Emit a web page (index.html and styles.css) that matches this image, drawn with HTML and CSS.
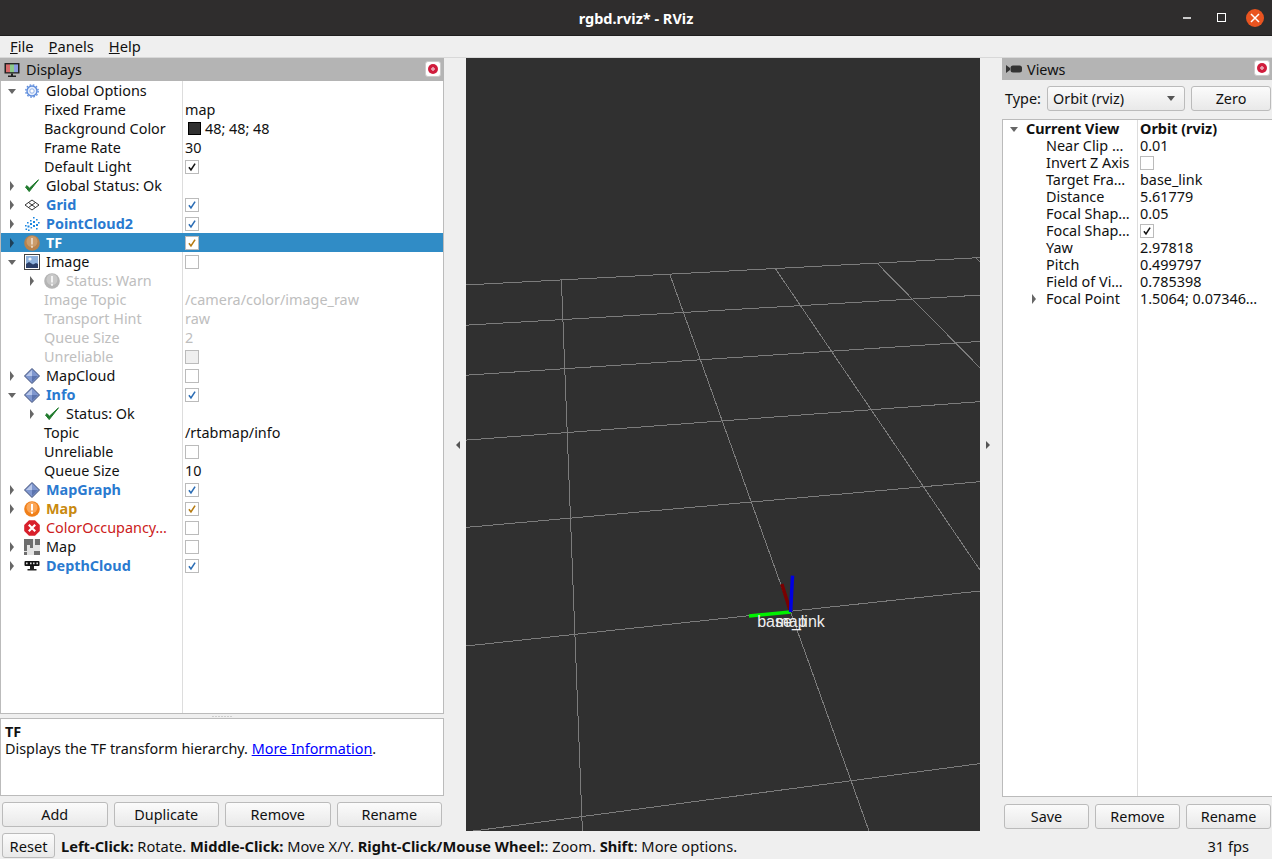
FILE: index.html
```html
<!DOCTYPE html>
<html lang="en">
<head>
    <meta charset="UTF-8">
    <title>rgbd.rviz* - RViz</title>
    <link rel="stylesheet" href="styles.css">
</head>
<body>

<!-- icons used by the tree rows -->
<svg class="sprite" aria-hidden="true">
    <symbol id="i-gear" viewBox="0 0 16 16">
        <circle cx="8" cy="8" r="5" fill="#e6eefc" stroke="#5d8cdc" stroke-width="1.4"/>
        <circle cx="8" cy="8" r="6.2" fill="none" stroke="#5d8cdc" stroke-width="1.4" stroke-dasharray="1.6 1.65"/>
        <circle cx="8" cy="8" r="2.2" fill="#fff" stroke="#8fb0e8"/>
    </symbol>
    <symbol id="i-check" viewBox="0 0 16 16">
        <path d="M1.5 9 L5.2 13.6 L14.5 1.8 L5.4 10.2 L3 7.6 Z" fill="#1f7a2c" stroke="#1f7a2c" stroke-linejoin="round"/>
    </symbol>
    <symbol id="i-grid" viewBox="0 0 16 16">
        <path d="M1 8 L8 3 L15 8 L8 13 Z M4.5 5.5 L11.5 10.5 M11.5 5.5 L4.5 10.5" fill="none" stroke="#333" stroke-width="1"/>
    </symbol>
    <symbol id="i-cloud" viewBox="0 0 16 16">
        <path d="M9 1h1.6v1.6H9z M12 3h1.6v1.6H12z M6 4h1.6v1.6H6z M9 5h2v2H9z M3 6h1.6v1.6H3z M14 6h1.6v1.6H14z M6 7h2v2H6z M12 8h2v2h-2z M1 9h1.6v1.6H1z M3.5 9.5h2v2h-2z M9 9h2v2H9z M6.5 11h1.6v1.6H6.5z M1.5 12.5h1.6v1.6H1.5z M12 12h1.6v1.6H12z M4 13.5h1.6v1.6H4z" fill="#1c86e0"/>
    </symbol>
    <symbol id="i-warn" viewBox="0 0 16 16">
        <circle cx="8" cy="8" r="7.8" fill="#f0801a"/>
        <circle cx="8" cy="6.5" r="5.5" fill="#fba75a"/>
        <path d="M7 3h2v6.4H7z M7 10.8h2v2H7z" fill="#fff"/>
    </symbol>
    <symbol id="i-warn-sel" viewBox="0 0 16 16">
        <circle cx="8" cy="8" r="7.8" fill="#b9824c"/>
        <circle cx="8" cy="6.5" r="5.5" fill="#cb9c6c"/>
        <path d="M7 3h2v6.4H7z M7 10.8h2v2H7z" fill="#e7d3bd"/>
    </symbol>
    <symbol id="i-warn-off" viewBox="0 0 16 16">
        <circle cx="8" cy="8" r="7.8" fill="#b4b4b4"/>
        <circle cx="8" cy="6.5" r="5.5" fill="#c8c8c8"/>
        <path d="M7 3h2v6.4H7z M7 10.8h2v2H7z" fill="#f2f2f2"/>
    </symbol>
    <symbol id="i-error" viewBox="0 0 16 16">
        <path d="M5 .2h6L15.8 5v6L11 15.8H5L.2 11V5z" fill="#d8202c"/>
        <path d="M4.8 4.8l6.4 6.4M11.2 4.8l-6.4 6.4" stroke="#fff" stroke-width="2.2"/>
    </symbol>
    <symbol id="i-image" viewBox="0 0 16 16">
        <rect x=".5" y=".5" width="15" height="15" fill="#fff" stroke="#444"/>
        <rect x="2" y="2" width="12" height="12" fill="#8fb2dc"/>
        <path d="M2 14 V10 L5 8 L9 10.5 L12 9 L14 10 V14 Z" fill="#2b3f68"/>
        <circle cx="6" cy="5" r="1.6" fill="#eef4fb"/>
    </symbol>
    <symbol id="i-diamond" viewBox="0 0 16 16">
        <path d="M8 .5 L15.5 8 L8 15.5 L.5 8 Z" fill="#7f97cf" stroke="#3f4f78"/>
        <path d="M8 2 L8 8 L2 8 Z" fill="#b9c8ea"/>
        <path d="M8 14 L8 8 L14 8 Z" fill="#5c74ae"/>
    </symbol>
    <symbol id="i-map" viewBox="0 0 16 16">
        <rect width="16" height="16" fill="#e4e4e4"/>
        <path d="M0 0h6v6H0z M6 0h3v3H6z M11 0h5v6h-5z M0 6h3v6H0z M6 3h3v6H6z M0 13h3v3H0z M10 12h6v4h-6z" fill="#6e6e6e"/>
    </symbol>
    <symbol id="i-depth" viewBox="0 0 16 16">
        <rect x=".5" y="3" width="15" height="5" rx="1" fill="#111"/>
        <path d="M2 4.6h1.6v1.6H2z M6 4.6h1.6v1.6H6z M9 4.6h1.6v1.6H9z M12.4 4.6H14v1.6h-1.6z" fill="#ddd"/>
        <path d="M6 8h4v3H6z M3.5 11h9v1.6h-9z" fill="#222"/>
    </symbol>
    <symbol id="i-tick" viewBox="0 0 14 14">
        <path d="M3.4 7.2 L5.8 10.4 L10.6 3" fill="none" stroke="currentColor" stroke-width="1.8"/>
    </symbol>
</svg>

<header class="titlebar">
    <span></span>
    <div class="wintitle">rgbd.rviz* - RViz</div>
    <div class="winbtns">
        <svg width="8" height="2" viewBox="0 0 8 2"><path d="M0 1h8" stroke="#fff" stroke-width="1.5"/></svg>
        <svg width="9" height="9" viewBox="0 0 9 9"><rect x=".5" y=".5" width="8" height="8" fill="none" stroke="#fff"/></svg>
        <div class="winclose">
            <svg width="10" height="10" viewBox="0 0 10 10"><path d="M1 1l8 8M9 1l-8 8" stroke="#fff" stroke-width="1.5"/></svg>
        </div>
    </div>
</header>

<nav class="menubar">
    <span><u>F</u>ile</span>
    <span><u>P</u>anels</span>
    <span><u>H</u>elp</span>
</nav>

<main class="workspace">
    <section class="dock dock-left">
        <div class="dock-title">
            <svg class="dock-icon" viewBox="0 0 16 16">
                <rect x=".5" y="1" width="15" height="10.5" fill="#222"/>
                <rect x="2" y="2.4" width="4" height="7.8" fill="#d76a6a"/>
                <rect x="6" y="2.4" width="4" height="7.8" fill="#8cc98a"/>
                <rect x="10" y="2.4" width="4" height="7.8" fill="#8a9be0"/>
                <path d="M7 11.5h2v2H7z M4 13.5h8V15H4z" fill="#222"/>
            </svg>
            <span>Displays</span>
            <div class="dock-close"><i></i></div>
        </div>
        <div class="tree tree-displays">
            <div class="row"><div class="name"><span class="arrow open"></span><svg class="icon"><use href="#i-gear"/></svg><span>Global Options</span></div></div>
            <div class="row"><div class="name prop">Fixed Frame</div><div class="value">map</div></div>
            <div class="row"><div class="name prop">Background Color</div><div class="value"><i class="swatch"></i>48; 48; 48</div></div>
            <div class="row"><div class="name prop">Frame Rate</div><div class="value">30</div></div>
            <div class="row"><div class="name prop">Default Light</div><div class="value"><span class="box"><svg><use href="#i-tick"/></svg></span></div></div>
            <div class="row"><div class="name"><span class="arrow"></span><svg class="icon"><use href="#i-check"/></svg><span>Global Status: Ok</span></div></div>
            <div class="row"><div class="name"><span class="arrow"></span><svg class="icon"><use href="#i-grid"/></svg><b class="blue">Grid</b></div><div class="value"><span class="box blue"><svg><use href="#i-tick"/></svg></span></div></div>
            <div class="row"><div class="name"><span class="arrow"></span><svg class="icon"><use href="#i-cloud"/></svg><b class="blue">PointCloud2</b></div><div class="value"><span class="box blue"><svg><use href="#i-tick"/></svg></span></div></div>
            <div class="row selected"><div class="name"><span class="arrow"></span><svg class="icon"><use href="#i-warn-sel"/></svg><b>TF</b></div><div class="value"><span class="box orange"><svg><use href="#i-tick"/></svg></span></div></div>
            <div class="row"><div class="name"><span class="arrow open"></span><svg class="icon"><use href="#i-image"/></svg><span>Image</span></div><div class="value"><span class="box"></span></div></div>
            <div class="row off"><div class="name sub"><span class="arrow"></span><svg class="icon"><use href="#i-warn-off"/></svg><span>Status: Warn</span></div></div>
            <div class="row off"><div class="name prop">Image Topic</div><div class="value">/camera/color/image_raw</div></div>
            <div class="row off"><div class="name prop">Transport Hint</div><div class="value">raw</div></div>
            <div class="row off"><div class="name prop">Queue Size</div><div class="value">2</div></div>
            <div class="row off"><div class="name prop">Unreliable</div><div class="value"><span class="box"></span></div></div>
            <div class="row"><div class="name"><span class="arrow"></span><svg class="icon"><use href="#i-diamond"/></svg><span>MapCloud</span></div><div class="value"><span class="box"></span></div></div>
            <div class="row"><div class="name"><span class="arrow open"></span><svg class="icon"><use href="#i-diamond"/></svg><b class="blue">Info</b></div><div class="value"><span class="box blue"><svg><use href="#i-tick"/></svg></span></div></div>
            <div class="row"><div class="name sub"><span class="arrow"></span><svg class="icon"><use href="#i-check"/></svg><span>Status: Ok</span></div></div>
            <div class="row"><div class="name prop">Topic</div><div class="value">/rtabmap/info</div></div>
            <div class="row"><div class="name prop">Unreliable</div><div class="value"><span class="box"></span></div></div>
            <div class="row"><div class="name prop">Queue Size</div><div class="value">10</div></div>
            <div class="row"><div class="name"><span class="arrow"></span><svg class="icon"><use href="#i-diamond"/></svg><b class="blue">MapGraph</b></div><div class="value"><span class="box blue"><svg><use href="#i-tick"/></svg></span></div></div>
            <div class="row"><div class="name"><span class="arrow"></span><svg class="icon"><use href="#i-warn"/></svg><b class="orange">Map</b></div><div class="value"><span class="box orange"><svg><use href="#i-tick"/></svg></span></div></div>
            <div class="row"><div class="name"><span class="arrow none"></span><svg class="icon"><use href="#i-error"/></svg><span class="red">ColorOccupancy…</span></div><div class="value"><span class="box"></span></div></div>
            <div class="row"><div class="name"><span class="arrow"></span><svg class="icon"><use href="#i-map"/></svg><span>Map</span></div><div class="value"><span class="box"></span></div></div>
            <div class="row"><div class="name"><span class="arrow"></span><svg class="icon"><use href="#i-depth"/></svg><b class="blue">DepthCloud</b></div><div class="value"><span class="box blue"><svg><use href="#i-tick"/></svg></span></div></div>
        </div>
        <div class="handle"></div>
        <div class="description">
            <b>TF</b><br>
            Displays the TF transform hierarchy. <a href="#">More Information</a>.
        </div>
        <div class="btnrow">
            <button>Add</button>
            <button>Duplicate</button>
            <button>Remove</button>
            <button>Rename</button>
        </div>
    </section>

    <div class="splitter"><i class="tri-left"></i></div>

    <svg class="viewport" viewBox="466 58 514 773">
        <g class="grid">
            <path d="M466 285 L980 257.6"/>
            <path d="M466 325.2 L980 295.1"/>
            <path d="M466 375.2 L980 341.4"/>
            <path d="M466 440.1 L980 401.6"/>
            <path d="M466 527.4 L980 481.7"/>
            <path d="M466 646 L980 591"/>
            <path d="M466 832 L980 763.6"/>
            <path d="M561.4 280 L582.4 831"/>
            <path d="M669.6 273.8 L869 831"/>
            <path d="M775.4 268.7 L980 570"/>
            <path d="M877.5 263.7 L980 367.8"/>
            <path d="M975.5 257.6 L980 262"/>
        </g>
        <path class="axis" d="M790.6 612 L781.8 584" stroke="#7a0000"/>
        <path class="axis" d="M790.6 612 L749 615.9" stroke="#00f000"/>
        <path class="axis" d="M790.6 612 L792.5 575.6" stroke="#0000e0"/>
        <text class="frame" x="791" y="627" text-anchor="middle">base_link</text>
        <text class="frame" x="791" y="627" text-anchor="middle">map</text>
    </svg>

    <div class="splitter"><i class="tri-right"></i></div>

    <section class="dock dock-right">
        <div class="dock-title views-title">
            <svg class="dock-icon" viewBox="0 0 16 16">
                <path d="M0 4 L4 7 V9 L0 12 Z" fill="#333"/>
                <rect x="4.5" y="4.5" width="11.5" height="7" rx="2.5" fill="#333"/>
            </svg>
            <span>Views</span>
            <div class="dock-close"><i></i></div>
        </div>
        <div class="toolbar">
            <label>Type:</label>
            <div class="combo"><span>Orbit (rviz)</span><i class="tri-down"></i></div>
            <button class="zero">Zero</button>
        </div>
        <div class="tree tree-views">
            <div class="row"><div class="name head"><span class="arrow open"></span><b>Current View</b></div><div class="value"><b>Orbit (rviz)</b></div></div>
            <div class="row"><div class="name prop">Near Clip …</div><div class="value">0.01</div></div>
            <div class="row"><div class="name prop">Invert Z Axis</div><div class="value"><span class="box"></span></div></div>
            <div class="row"><div class="name prop">Target Fra…</div><div class="value">base_link</div></div>
            <div class="row"><div class="name prop">Distance</div><div class="value">5.61779</div></div>
            <div class="row"><div class="name prop">Focal Shap…</div><div class="value">0.05</div></div>
            <div class="row"><div class="name prop">Focal Shap…</div><div class="value"><span class="box"><svg><use href="#i-tick"/></svg></span></div></div>
            <div class="row"><div class="name prop">Yaw</div><div class="value">2.97818</div></div>
            <div class="row"><div class="name prop">Pitch</div><div class="value">0.499797</div></div>
            <div class="row"><div class="name prop">Field of Vi…</div><div class="value">0.785398</div></div>
            <div class="row"><div class="name prop child"><span class="arrow"></span><span>Focal Point</span></div><div class="value">1.5064; 0.07346…</div></div>
        </div>
        <div class="btnrow">
            <button>Save</button>
            <button>Remove</button>
            <button>Rename</button>
        </div>
    </section>
</main>

<footer class="statusbar">
    <button class="reset">Reset</button>
    <div class="hint"><b>Left-Click:</b> Rotate. <b>Middle-Click:</b> Move X/Y. <b>Right-Click/Mouse Wheel:</b>: Zoom. <b>Shift</b>: More options.</div>
    <div class="fps">31 fps</div>
</footer>

</body>
</html>
```

FILE: styles.css
```css
* {
    box-sizing: border-box;
}

html, body {
    margin: 0;
    height: 859px;
    overflow: hidden;
}

body {
    display: flex;
    flex-direction: column;
    background-color: #efefef;
    color: #111;
    font-family: "Noto Sans", sans-serif;
    font-size: 14.4px;
}

.sprite {
    position: absolute;
    width: 0;
    height: 0;
}

/* window frame */
.titlebar {
    display: grid;
    grid-template-columns: 1fr auto 1fr;
    align-items: center;
    height: 36px;
    background-color: #2f2d2d;
    border-bottom: 1px solid #1f1e1e;
    color: #fff;
}

.wintitle {
    font-weight: bold;
    font-size: 14.5px;
}

.winbtns {
    display: flex;
    align-items: center;
    justify-content: flex-end;
    gap: 26px;
    padding-right: 8px;
}

.winclose {
    display: flex;
    align-items: center;
    justify-content: center;
    width: 18px;
    height: 18px;
    margin-left: -6px;
    border-radius: 50%;
    background-color: #e95420;
}

.menubar {
    display: flex;
    align-items: center;
    gap: 15px;
    height: 22px;
    padding: 0 0 1px 10px;
    border-bottom: 1px solid #d8d8d8;
    font-size: 14.7px;
}

.workspace {
    display: flex;
    height: 773px;
}

.dock {
    display: flex;
    flex-direction: column;
}

.dock-left {
    width: 444px;
}

.dock-right {
    width: 270px;
}

.dock-title {
    display: flex;
    align-items: center;
    gap: 6px;
    height: 23px;
    padding: 0 3px 0 4px;
    background-color: #b4b4b4;
}

.views-title {
    height: 22px;
    gap: 5px;
    padding-right: 2px;
}

.dock-icon {
    width: 16px;
    height: 16px;
    flex: none;
}

.dock-close {
    display: flex;
    align-items: center;
    justify-content: center;
    width: 16px;
    height: 16px;
    margin: -2px 0 0 auto;
    background-color: #fff;
    border: 1px solid #ccc;
    border-radius: 3px;
}

.dock-close i {
    display: block;
    width: 10px;
    height: 10px;
    border-radius: 50%;
    background: radial-gradient(#e8a0b0 0, #e8a0b0 1.5px, #d01c3c 2px);
}

/* property trees */
.tree {
    flex: 1;
    background-color: #fff;
    border: 1px solid #bbb;
    background-repeat: no-repeat;
    background-image: linear-gradient(#ddd, #ddd);
    background-size: 1px 100%;
}

.tree-displays {
    --col: 181px;
    background-position: 181px 0;
    border-top: 0;
}

.tree-views {
    --col: 134px;
    background-position: 134px 0;
    border-right: 0;
}

.row {
    display: flex;
    height: 19px;
    line-height: 19px;
}

.tree-views .row {
    height: 17px;
    line-height: 17px;
}

.name {
    display: flex;
    align-items: center;
    flex: none;
    width: var(--col);
    padding-left: 6px;
    white-space: nowrap;
}

.name.prop {
    padding-left: 43px;
}

.name.sub {
    padding-left: 26px;
}

.name.head {
    padding-left: 6px;
}

.name.child {
    padding-left: 26px;
}

.value {
    display: flex;
    align-items: center;
    flex: 1;
    padding-left: 3px;
    white-space: nowrap;
}

.selected {
    background-color: #308cc6;
    color: #fff;
}

.off {
    color: #bebebe;
}

.off .box {
    background-color: #efefef;
}

.arrow {
    flex: none;
    width: 17px;
    height: 10px;
    position: relative;
}

.arrow::before {
    content: "";
    position: absolute;
    left: 3px;
    top: 0;
    border-style: solid;
    border-width: 5px 0 5px 4px;
    border-color: transparent transparent transparent #666;
}

.arrow.open::before {
    left: 1px;
    top: 3px;
    border-width: 5px 4px 0 4px;
    border-color: #666 transparent transparent transparent;
}

.arrow.none::before {
    display: none;
}

.selected .arrow::before {
    border-left-color: #1d3f58;
}

.icon {
    flex: none;
    width: 16px;
    height: 16px;
    margin-right: 6px;
}

.blue {
    color: #2a7ad0;
}

.orange {
    color: #c98a10;
}

.red {
    color: #cc2020;
}

.selected b {
    color: #fff;
}

.box {
    display: block;
    width: 14px;
    height: 14px;
    background-color: #fff;
    border: 1px solid #bbb;
    color: #111;
}

.box svg {
    display: block;
    width: 12px;
    height: 12px;
}

.box.blue {
    color: #2a6cb4;
}

.box.orange {
    color: #b57a10;
}

.swatch {
    display: block;
    width: 13px;
    height: 13px;
    margin: 0 4px 0 3px;
    background-color: #303030;
    border: 1px solid #000;
}

.handle {
    height: 4px;
    margin: 0 212px;
    background-image: radial-gradient(#aaa 0.6px, transparent 0.7px);
    background-size: 3px 3px;
    background-position: center;
    background-repeat: repeat-x;
}

.description {
    height: 78px;
    padding: 4px;
    background-color: #fff;
    border: 1px solid #bbb;
    line-height: 17px;
}

.description a {
    color: #0000ff;
}

.btnrow {
    display: flex;
    gap: 6px;
    padding: 6px 2px 4px;
}

.dock-right .btnrow {
    padding: 7px 1px 2px 2px;
}

button {
    flex: 1;
    height: 25px;
    padding: 0;
    font: inherit;
    color: #111;
    background: linear-gradient(#fbfbfb, #e9e9e9);
    border: 1px solid #bbb;
    border-radius: 3px;
}

.toolbar {
    display: flex;
    align-items: center;
    height: 39px;
    padding: 0 1px 2px 3px;
}

.toolbar label {
    width: 42px;
}

.combo {
    display: flex;
    align-items: center;
    justify-content: space-between;
    width: 138px;
    height: 25px;
    padding: 0 9px 0 5px;
    background: linear-gradient(#fbfbfb, #e9e9e9);
    border: 1px solid #bbb;
    border-radius: 3px;
}

.zero {
    flex: none;
    width: 80px;
    margin-left: 6px;
}

.tri-down {
    border-style: solid;
    border-width: 5px 4px 0 4px;
    border-color: #555 transparent transparent transparent;
}

/* 3d view */
.splitter {
    display: flex;
    align-items: center;
    justify-content: center;
    width: 22px;
}

.tri-left {
    margin-right: -5px;
    border-style: solid;
    border-width: 4px 4px 4px 0;
    border-color: transparent #555 transparent transparent;
}

.tri-right {
    margin-left: -6px;
    border-style: solid;
    border-width: 4px 0 4px 4px;
    border-color: transparent transparent transparent #555;
}

.viewport {
    display: block;
    width: 514px;
    height: 773px;
    flex: none;
    background-color: #303030;
}

.grid path {
    fill: none;
    stroke: #7c7c7c;
    stroke-width: 1;
    shape-rendering: crispEdges;
}

.axis {
    fill: none;
    stroke-width: 3.5;
}

.frame {
    fill: #eee;
    font-family: "Liberation Sans", sans-serif;
    font-size: 16px;
}

/* bottom bar */
.statusbar {
    display: flex;
    align-items: center;
    flex: 1;
    padding: 2px 23px 1px 2px;
    font-size: 14.65px;
}

.reset {
    flex: none;
    width: 53px;
    height: 25px;
}

.hint {
    margin-left: 6px;
    white-space: nowrap;
}

.fps {
    margin-left: auto;
}
```
